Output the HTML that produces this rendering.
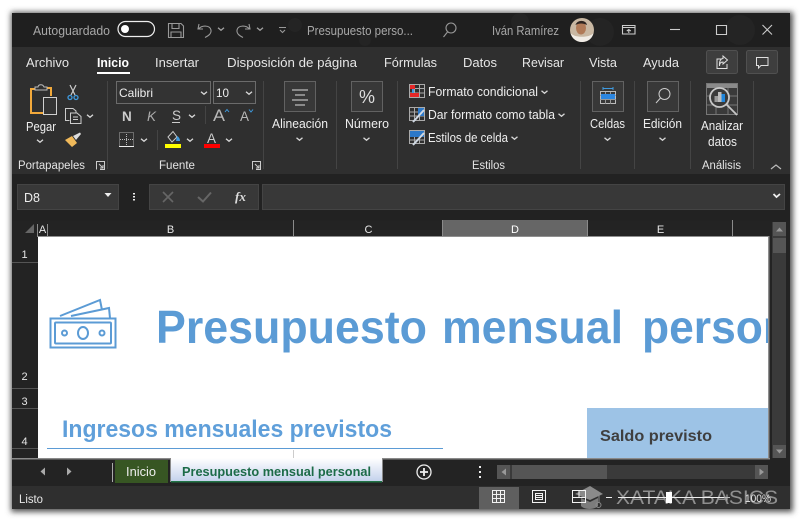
<!DOCTYPE html>
<html><head><meta charset="utf-8">
<style>
html,body{margin:0;padding:0;background:#fff;width:805px;height:525px;overflow:hidden}
svg{display:block}
text{font-family:"Liberation Sans",sans-serif;white-space:pre}
</style></head><body>
<svg xmlns="http://www.w3.org/2000/svg" width="805" height="525" viewBox="0 0 805 525">
<defs>
<filter id="sh" x="-5%" y="-5%" width="110%" height="110%"><feGaussianBlur stdDeviation="3"/></filter>
<path id="c" d="M-3-1.300L0 1.300L3-1.300" fill="none" stroke="#d8d8d8" stroke-width="1.300"/>
<clipPath id="sheet"><rect x="38" y="237" width="730" height="221"/></clipPath>
<linearGradient id="tg" x1="0" y1="0" x2="0" y2="1"><stop offset="0" stop-color="#fff"/><stop offset="1" stop-color="#c4d2ec"/></linearGradient>
</defs>
<rect width="805" height="525" fill="#fff"/>
<rect x="11" y="12" width="782" height="500" fill="#555" filter="url(#sh)"/>
<rect x="12" y="13" width="778" height="496" fill="#232323"/>
<!-- title bar -->
<rect x="12" y="13" width="778" height="34" fill="#1f1f1f"/>
<g fill="#242424"><circle cx="295" cy="25" r="7"/><circle cx="365" cy="40" r="6"/><circle cx="600" cy="32" r="14"/><circle cx="740" cy="30" r="15"/><circle cx="520" cy="22" r="9"/></g>
<text x="33" y="35" font-size="12.500" fill="#a8a8a8" textLength="77" lengthAdjust="spacingAndGlyphs">Autoguardado</text>
<rect x="118" y="21.500" width="36.500" height="15" rx="7.500" fill="none" stroke="#eee" stroke-width="1.200"/>
<circle cx="125" cy="29" r="4" fill="#fff"/>
<g fill="none" stroke="#999" stroke-width="1.100">
<path d="M168.500 23.500H181L183.500 26V37.500H168.500Z"/><path d="M172 23.500V28.500H179V23.500M171 37.500V32H181V37.500"/>
<path d="M199 24L198 29L203 29M198.500 29C202 25 210 25 211 30C211.500 34 208 36 205 37.500"/>
<path d="M249 24L250 29L245 29M249.500 29C246 25 238 25 237 30C236.500 34 240 36 243 37.500"/>
<circle cx="451" cy="28" r="5"/><path d="M447.500 32L443.500 37"/>
<path d="M622.500 25.500H635V34H622.500ZM622.500 27.500H635M628.800 33V29.500M626.800 31L628.800 29.500L630.800 31" stroke="#ccc"/>
<path d="M716.500 25.500H726.500V34.500H716.500Z" stroke="#ccc"/>
<path d="M762.500 25L772 34.500M772 25L762.500 34.500" stroke="#ccc"/>
<path d="M670 29.500H680" stroke="#ccc"/>
<path d="M279 27.500H286M280 30L282.500 32.500L285 30" stroke="#999"/>
</g>
<use href="#c" x="221" y="29" opacity=".7"/><use href="#c" x="260" y="29" opacity=".7"/>
<text x="307" y="35" font-size="12.500" fill="#a8a8a8" textLength="106" lengthAdjust="spacingAndGlyphs">Presupuesto perso...</text>
<text x="492" y="35" font-size="12.500" fill="#a8a8a8" textLength="67" lengthAdjust="spacingAndGlyphs">Iván Ramírez</text>
<circle cx="582" cy="30" r="12" fill="#c9b8a3"/>
<path d="M570.500 33C574 38 590 38 593.500 33C592 40 586 42 582 42C577 42 572 39 570.500 33Z" fill="#f0ece6"/>
<ellipse cx="581" cy="28" rx="5" ry="6.500" fill="#b07a58"/>
<path d="M575.500 25C577 19.500 586 19.500 587 25C583 23 579 23 575.500 25Z" fill="#2e2420"/>
<!-- ribbon -->
<rect x="12" y="47" width="778" height="127" fill="#2f2f2f"/>
<g font-size="12.500" fill="#e6e6e6">
<text x="26" y="67" textLength="43" lengthAdjust="spacingAndGlyphs">Archivo</text>
<text x="97" y="67" textLength="32" lengthAdjust="spacingAndGlyphs" font-weight="bold" fill="#fff">Inicio</text>
<text x="155" y="67" textLength="44" lengthAdjust="spacingAndGlyphs">Insertar</text>
<text x="227" y="67" textLength="130" lengthAdjust="spacingAndGlyphs">Disposición de página</text>
<text x="384" y="67" textLength="53" lengthAdjust="spacingAndGlyphs">Fórmulas</text>
<text x="463" y="67" textLength="34" lengthAdjust="spacingAndGlyphs">Datos</text>
<text x="522" y="67" textLength="42" lengthAdjust="spacingAndGlyphs">Revisar</text>
<text x="589" y="67" textLength="28" lengthAdjust="spacingAndGlyphs">Vista</text>
<text x="643" y="67" textLength="36" lengthAdjust="spacingAndGlyphs">Ayuda</text>
</g>
<rect x="97" y="72" width="33" height="2" fill="#fff"/>
<rect x="706.500" y="50.500" width="31" height="23" rx="2" fill="#3e3e3e" stroke="#505050"/>
<rect x="746.500" y="50.500" width="31" height="23" rx="2" fill="#3e3e3e" stroke="#505050"/>
<g fill="none" stroke="#e0e0e0" stroke-width="1">
<path d="M721 59H717V68.500H727V64M723 56L727.500 60L723 64V62C720 62 719.500 64 719.500 66C719 61 721 58.500 723 58.500Z"/>
<path d="M756.500 57.500H768V65.500H761L758.500 68V65.500H756.500Z"/>
</g>
<!-- separators -->
<g stroke="#444" stroke-width="1">
<path d="M107.500 81V169M263.500 81V169M336.500 81V169M397.500 81V169M580.500 81V169M634.500 81V169M690.500 81V169M753.500 81V169M205.500 106V124M157.500 130V150"/>
</g>
<!-- clipboard -->
<path d="M36 89H31V113H44" fill="none" stroke="#f2a93b" stroke-width="2"/>
<path d="M46 88H51V96" fill="none" stroke="#f2a93b" stroke-width="2"/>
<path d="M35 90V87H38C38.500 84 43 84 44 87H47V90Z" fill="#2f2f2f" stroke="#bbb"/>
<rect x="43.500" y="97.500" width="13" height="17" fill="#333" stroke="#d0d0d0"/>
<text x="26" y="131" font-size="12.500" fill="#f0f0f0" textLength="30" lengthAdjust="spacingAndGlyphs">Pegar</text>
<use href="#c" x="40" y="141"/>
<path d="M70 85L75 95M76 85L71 95" stroke="#ccc" stroke-width="1.200" fill="none"/>
<circle cx="70" cy="97.500" r="2" fill="none" stroke="#3f9be0" stroke-width="1.300"/><circle cx="76" cy="97.500" r="2" fill="none" stroke="#3f9be0" stroke-width="1.300"/>
<path d="M69.500 120.500H65.500V108.500H73L76 111V113M70.500 113H77L81 116.500V123.500H70.500ZM73 117H78M73 119.500H78" fill="none" stroke="#ccc"/>
<use href="#c" x="90" y="116"/>
<path d="M65 140L72 136L77 143L72 147Z" fill="#f0b95a"/><path d="M73 136L80 132.500L81 134L76 140Z" fill="#ddd"/>
<text x="18" y="169" font-size="11.500" fill="#e4e4e4" textLength="67" lengthAdjust="spacingAndGlyphs">Portapapeles</text>
<g fill="none" stroke="#ccc"><path d="M96.500 169.500V161.500H104.500V169.500H100M99 164L103 168M103 165V168H100"/><path d="M252.500 169.500V161.500H260.500V169.500H256M255 164L259 168M259 165V168H256"/></g>
<!-- font -->
<rect x="116.500" y="81.500" width="94" height="22" fill="#333" stroke="#6b6b6b"/>
<rect x="213.500" y="81.500" width="42" height="22" fill="#333" stroke="#6b6b6b"/>
<text x="119" y="97" font-size="12" fill="#eee" textLength="34" lengthAdjust="spacingAndGlyphs">Calibri</text>
<text x="216" y="97" font-size="12" fill="#eee" textLength="13" lengthAdjust="spacingAndGlyphs">10</text>
<use href="#c" x="204" y="93"/><use href="#c" x="249" y="93"/>
<text x="122" y="121" font-size="13.500" font-weight="bold" fill="#ccc">N</text>
<text x="147" y="121" font-size="13.500" font-style="italic" fill="#aaa">K</text>
<text x="172" y="120" font-size="13.500" fill="#ccc">S</text>
<rect x="172" y="122" width="8" height="1" fill="#ccc"/>
<use href="#c" x="192" y="116"/>
<text x="213" y="121" font-size="17" fill="#b8b8b8" textLength="12" lengthAdjust="spacingAndGlyphs">A</text>
<path d="M225 112L227 109.500L229 112" fill="none" stroke="#3f9be0"/>
<text x="240" y="121" font-size="14" fill="#b8b8b8" textLength="9" lengthAdjust="spacingAndGlyphs">A</text>
<path d="M249 109.500L251 112L253 109.500" fill="none" stroke="#3f9be0"/>
<path d="M119.500 132.500H133.500V146.500H119.500Z" fill="none" stroke="#aaa" stroke-dasharray="1 1"/>
<path d="M119 146.500H134" stroke="#eee"/><path d="M126.500 134V146M120 139.500H133" stroke="#bbb" stroke-dasharray="1 1"/>
<use href="#c" x="144" y="140"/>
<path d="M168 137L173 131.500L177 137L172 142Z" fill="none" stroke="#ccc"/><path d="M177 136C179 137 180 139 180 141H176Z" fill="#3f9be0"/>
<rect x="165" y="144" width="16" height="4" fill="#ffff00"/>
<use href="#c" x="190" y="140"/>
<text x="207" y="143" font-size="13.500" fill="#ccc">A</text>
<rect x="204" y="144" width="16" height="4" fill="#ff0000"/>
<use href="#c" x="229" y="140"/>
<text x="159" y="169" font-size="11.500" fill="#e4e4e4" textLength="36" lengthAdjust="spacingAndGlyphs">Fuente</text>
<!-- alineacion -->
<rect x="284.500" y="81.500" width="31" height="30" fill="#383838" stroke="#626262"/>
<path d="M292 90H308M295 95H305M292 100H308M295 105H305" stroke="#ddd"/>
<text x="272" y="128" font-size="12.500" fill="#eee" textLength="56" lengthAdjust="spacingAndGlyphs">Alineación</text>
<use href="#c" x="299.500" y="139"/>
<rect x="351.500" y="81.500" width="31" height="30" fill="#383838" stroke="#626262"/>
<text x="359" y="103" font-size="18" fill="#ddd" textLength="16" lengthAdjust="spacingAndGlyphs">%</text>
<text x="345" y="128" font-size="12.500" fill="#eee" textLength="44" lengthAdjust="spacingAndGlyphs">Número</text>
<use href="#c" x="366.500" y="139"/>
<!-- estilos -->
<rect x="409.500" y="84.500" width="15" height="13" fill="none" stroke="#aaa"/><path d="M414.500 85V97M419.500 85V97M410 88.500H424M410 93H424" stroke="#aaa"/>
<rect x="410" y="85" width="5" height="4" fill="#e52727"/><rect x="410" y="93" width="9" height="4" fill="#e52727"/><rect x="412" y="89" width="2" height="4" fill="#3f9be0"/>
<rect x="409.500" y="107.500" width="15" height="13" fill="none" stroke="#aaa"/><path d="M414.500 108V120M419.500 108V120M410 112H424M410 116H424" stroke="#aaa"/>
<rect x="418" y="108" width="6" height="8" fill="#2c78c8"/><path d="M413 122L424 110" stroke="#cfd8e2" stroke-width="2"/>
<rect x="409.500" y="130.500" width="15" height="13" fill="none" stroke="#aaa"/><rect x="410" y="131" width="14" height="6" fill="#2c78c8"/><path d="M414.500 137V143M419.500 137V143M410 140H424" stroke="#aaa"/><path d="M413 145L424 133" stroke="#cfd8e2" stroke-width="2"/>
<g font-size="12.500" fill="#eee">
<text x="428" y="96" textLength="110" lengthAdjust="spacingAndGlyphs">Formato condicional</text>
<text x="428" y="119" textLength="127" lengthAdjust="spacingAndGlyphs">Dar formato como tabla</text>
<text x="428" y="142" textLength="80" lengthAdjust="spacingAndGlyphs">Estilos de celda</text>
</g>
<use href="#c" x="544.500" y="92"/><use href="#c" x="561.500" y="115"/><use href="#c" x="514.500" y="138"/>
<text x="472" y="169" font-size="11.500" fill="#e4e4e4" textLength="33" lengthAdjust="spacingAndGlyphs">Estilos</text>
<!-- celdas -->
<rect x="592.500" y="81.500" width="31" height="30" fill="#383838" stroke="#626262"/>
<rect x="600.500" y="91.500" width="15" height="12" fill="none" stroke="#bbb"/><path d="M600 95.500H616M600 99.500H616M605.500 92V104M610.500 92V104" stroke="#999"/>
<rect x="601" y="94" width="14" height="5" fill="#2c86e0"/><path d="M603 88.500H613M603 87V90M613 87V90" stroke="#3f9be0"/>
<text x="590" y="128" font-size="12.500" fill="#eee" textLength="35" lengthAdjust="spacingAndGlyphs">Celdas</text>
<use href="#c" x="607.500" y="139"/>
<rect x="647.500" y="81.500" width="31" height="30" fill="#383838" stroke="#626262"/>
<circle cx="664.500" cy="94" r="5.500" fill="none" stroke="#ccc"/><path d="M660.500 98L656 103" stroke="#ccc"/>
<text x="643" y="128" font-size="12.500" fill="#eee" textLength="39" lengthAdjust="spacingAndGlyphs">Edición</text>
<use href="#c" x="662.500" y="139"/>
<!-- analizar -->
<rect x="706" y="83" width="32" height="32" fill="#3a3a3a"/>
<rect x="706" y="83" width="32" height="5" fill="#8a8a8a"/>
<path d="M706.500 83.500H737.500V114.500H706.500ZM706 96H738M706 105H738M716 88V115M728 88V115" fill="none" stroke="#777"/>
<circle cx="719.500" cy="97.500" r="9.500" fill="#3a3a3a" stroke="#c8c8c8" stroke-width="1.800"/>
<rect x="714.500" y="96" width="3.500" height="6" fill="#999"/><rect x="718" y="92" width="3.500" height="10" fill="#bbb"/><rect x="721.500" y="94" width="3.500" height="8" fill="#1f86dc"/>
<path d="M726.500 104.500L737 115" stroke="#c8c8c8" stroke-width="1.800"/>
<text x="701" y="130" font-size="12.500" fill="#eee" textLength="42" lengthAdjust="spacingAndGlyphs">Analizar</text>
<text x="708" y="146" font-size="12.500" fill="#eee" textLength="29" lengthAdjust="spacingAndGlyphs">datos</text>
<text x="702" y="169" font-size="11.500" fill="#e4e4e4" textLength="39" lengthAdjust="spacingAndGlyphs">Análisis</text>
<path d="M771 169L776 165L781 169" fill="none" stroke="#bbb" stroke-width="1.200"/>
<!-- formula bar -->
<rect x="12" y="174" width="778" height="47" fill="#222"/>
<rect x="17.500" y="184.500" width="101" height="25" fill="#383838" stroke="#444"/>
<text x="24" y="202" font-size="12.500" fill="#eee" textLength="16" lengthAdjust="spacingAndGlyphs">D8</text>
<path d="M104.500 193H111.500L108 197Z" fill="#eee"/>
<path d="M134 193V194.500M134 196V197.500M134 199V200.500" stroke="#eee" stroke-width="2"/>
<rect x="149.500" y="184.500" width="109" height="25" fill="#383838" stroke="#444"/>
<path d="M163 192L173 202M173 192L163 202" stroke="#666" stroke-width="1.600"/>
<path d="M198 197L203 201.500L211 192.500" fill="none" stroke="#666" stroke-width="2"/>
<text x="235" y="201" font-size="13" font-style="italic" font-weight="bold" fill="#ddd" style="font-family:'Liberation Serif',serif" textLength="11" lengthAdjust="spacingAndGlyphs">fx</text>
<rect x="262.500" y="184.500" width="522" height="25" fill="#383838" stroke="#444"/>
<path d="M773.500 194L776.500 197L780 194" fill="none" stroke="#eee" stroke-width="1.800"/>
<!-- col headers -->
<rect x="12" y="221" width="778" height="238" fill="#232323"/>
<path d="M34 224V233H25Z" fill="#666"/>
<rect x="443" y="220" width="145" height="16" fill="#666"/>
<path d="M37.500 224V236M47.500 224V236M293.500 220V236M442.500 220V236M587.500 220V236M732.500 220V236" stroke="#8a8a8a"/>
<rect x="37" y="236" width="732" height="1" fill="#8f8f8f"/>
<g font-size="11" fill="#e6e6e6" text-anchor="middle">
<text x="42.500" y="233">A</text><text x="170.500" y="233">B</text><text x="368.500" y="233">C</text><text x="515" y="233" fill="#fff">D</text><text x="660.500" y="233">E</text>
<text x="24.500" y="258">1</text><text x="24.500" y="380">2</text><text x="24.500" y="405">3</text><text x="24.500" y="445">4</text>
</g>
<path d="M12 262.500H38M12 388.500H38M12 408.500H38M12 448.500H38" stroke="#555"/>
<!-- sheet -->
<rect x="38" y="237" width="730" height="221" fill="#fff"/>
<g clip-path="url(#sheet)">
<g fill="none" stroke="#5b9bd5" stroke-width="2">
<rect x="50.500" y="318.500" width="65" height="29"/><rect x="55" y="322.500" width="56" height="21" rx="1"/>
<ellipse cx="83" cy="333" rx="5" ry="6"/><circle cx="64.500" cy="333" r="2.500"/><circle cx="102" cy="333" r="2.500"/>
<path d="M60 316L100 300L102 310M71 316L109 308L110 318"/>
</g>
<g font-size="46" font-weight="bold" fill="#5b9bd5">
<text x="156" y="343" textLength="271" lengthAdjust="spacingAndGlyphs">Presupuesto</text>
<text x="442" y="343" textLength="181" lengthAdjust="spacingAndGlyphs">mensual</text>
<text x="642" y="343" textLength="148" lengthAdjust="spacingAndGlyphs">person</text>
</g>
<text x="62" y="437" font-size="24" font-weight="bold" fill="#5f9fda" textLength="330" lengthAdjust="spacingAndGlyphs">Ingresos mensuales previstos</text>
<rect x="47" y="448" width="396" height="1" fill="#5b9bd5"/>
<rect x="293" y="450" width="1" height="8" fill="#ccc"/>
<rect x="587" y="408" width="181" height="50" fill="#9dc3e6"/>
<text x="600" y="441" font-size="16" font-weight="bold" fill="#3f3f3f" textLength="112" lengthAdjust="spacingAndGlyphs">Saldo previsto</text>
<text x="600" y="469" font-size="15" fill="#3f3f3f" textLength="160" lengthAdjust="spacingAndGlyphs">(Ingresos menos gastos)</text>
</g>
<rect x="768" y="236" width="1.500" height="223" fill="#8f8f8f"/>
<rect x="12" y="458" width="758" height="1.500" fill="#8a8a8a"/>
<!-- v scrollbar -->
<rect x="772" y="222" width="14" height="236" fill="#3a3a3a"/>
<rect x="773" y="222" width="13" height="14" fill="#555"/><path d="M776 231.500H783L779.500 227.500Z" fill="#999"/>
<rect x="773" y="238" width="13" height="15" fill="#555"/>
<rect x="773" y="445" width="13" height="13" fill="#555"/><path d="M776 449.500H783L779.500 453.500Z" fill="#999"/>
<!-- tabs -->
<path d="M45 467.500V475.500L40.500 471.500Z" fill="#aaa"/><path d="M67 467.500V475.500L71.500 471.500Z" fill="#aaa"/>
<rect x="112" y="463" width="1" height="19" fill="#aaa"/>
<rect x="115" y="460" width="53" height="23" fill="#375623"/>
<text x="126" y="476" font-size="12.500" fill="#eee" textLength="30" lengthAdjust="spacingAndGlyphs">Inicio</text>
<rect x="171" y="458" width="211" height="23" fill="url(#tg)"/>
<rect x="171" y="481" width="211" height="1.500" fill="#217346"/>
<path d="M170.500 459V482M382.500 459V482" stroke="#8a8a8a"/>
<text x="182" y="476" font-size="12.500" font-weight="bold" fill="#1c6b48" textLength="189" lengthAdjust="spacingAndGlyphs">Presupuesto mensual personal</text>
<circle cx="424" cy="472" r="7" fill="none" stroke="#eee" stroke-width="1.300"/>
<path d="M420 472H428M424 468V476" stroke="#eee" stroke-width="1.800"/>
<path d="M480 466V468M480 471V473M480 476V478" stroke="#eee" stroke-width="2"/>
<rect x="497" y="465" width="271" height="14" fill="#3a3a3a"/>
<rect x="497" y="465" width="13" height="14" fill="#555"/><path d="M506 468.500V475.500L501.500 472Z" fill="#999"/>
<rect x="512" y="465" width="95" height="14" fill="#555"/>
<rect x="755" y="465" width="13" height="14" fill="#555"/><path d="M759.500 468.500V475.500L764 472Z" fill="#999"/>
<!-- status -->
<rect x="12" y="486" width="778" height="23" fill="#2f2f2f"/>
<text x="19" y="503" font-size="11.500" fill="#e6e6e6" textLength="24" lengthAdjust="spacingAndGlyphs">Listo</text>
<rect x="479" y="487" width="40" height="22" fill="#5f5f5f"/>
<g fill="none" stroke="#f2f2f2">
<path d="M492.500 490.500H504.500V502.500H492.500ZM492.500 494.500H504.500M492.500 498.500H504.500M496.500 490.500V502.500M500.500 490.500V502.500"/>
<path d="M532.500 490.500H545.500V502.500H532.500ZM535.500 493.500H542.500V499.500H535.500ZM536 495.500H542M536 497.500H542"/>
</g>
<path d="M590 486L603 494L590 500L575 494Z" fill="#8a8a8a"/><path d="M581 498V506C585 510 594 510 598 506V498L590 502Z" fill="#7c7c7c"/>
<path d="M599 495V503" stroke="#8a8a8a"/><circle cx="598.500" cy="505" r="2.500" fill="none" stroke="#8a8a8a"/>
<path d="M572.500 490.500H585.500V502.500H572.500ZM572.500 497.500H585.500M579 490.500V497.500" fill="none" stroke="#f2f2f2"/>
<text x="616" y="504" font-size="19" fill="#8f8f8f" textLength="162" lengthAdjust="spacingAndGlyphs">XATAKA BASICS</text>
<path d="M606 497.500H612M618 497.500H730" stroke="#eee"/>
<path d="M724 497.500H730M727 494.500V500.500" stroke="#bbb"/>
<rect x="666" y="492" width="6" height="11" fill="#fff"/>
<text x="745" y="502" font-size="11" fill="#e6e6e6" textLength="26" lengthAdjust="spacingAndGlyphs">100%</text>
</svg>
</body></html>
